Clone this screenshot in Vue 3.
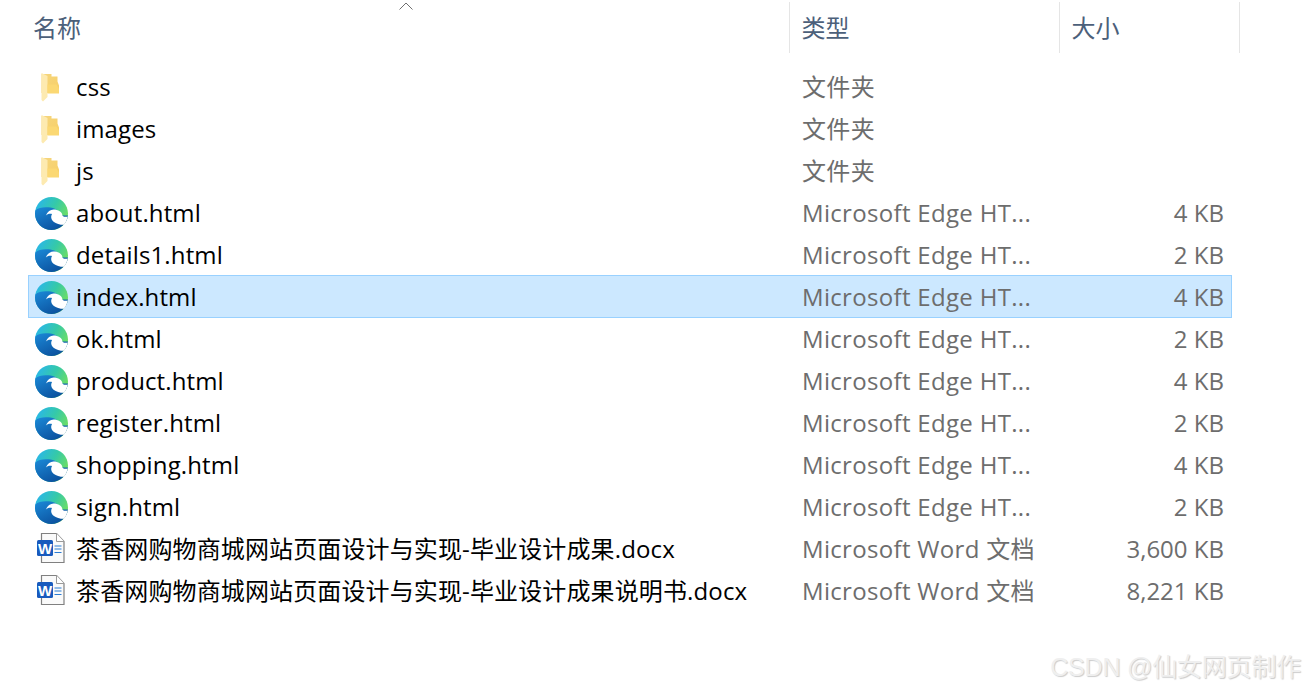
<template>
  <div class="explorer">
    <div class="header">
      <div class="col-head col-name">名称</div>
      <div class="col-head col-type">类型</div>
      <div class="col-head col-size">大小</div>
      <svg class="sort-arrow" viewBox="0 0 14 8" width="14" height="8" fill="none" stroke="#6f6f6f" stroke-width="1">
        <polyline points="0.5,7.5 7,1 13.5,7.5" />
      </svg>
    </div>

    <div class="list">
      <div v-for="file in files" :key="file.name" class="row" :class="{ selected: file.selected }">
        <div class="cell-name">
          <span class="icon">
            <svg v-if="file.kind === 'folder'" viewBox="0 0 33 33" width="33" height="33">
              <path d="M6.500 3h10v2.500h6v5l1.500 4v7.500H6.500z" fill="url(#folderBack)" />
              <path d="M6.500 2l6 3V26l-4.500 4.500-1.500-1.500z" fill="#fdeab0" />
              <path d="M12.500 13.500h9l2.500 4.500v4.500H12.500z" fill="#fbd873" />
            </svg>
            <svg v-else-if="file.kind === 'edge'" viewBox="0 0 32 32" width="33" height="33">
              <circle cx="16" cy="16" r="16" fill="url(#edgeTop)" />
              <path d="M0.300 13C3 10.500 8 9.500 13 10c6 .5 11 3.500 12 8H32c-1 8-8 14-16 14C7 32 0 25 0 16z" fill="url(#edgeBlue)" />
              <path d="M10.500 18c1.500-4 4.500-6 7.500-6 4.500 0 8.500 2.500 8.500 5.500 0 1.500 2 2 5.300 1.500-.8 3-1.800 6-3.800 8-4 0-7.500-1-10-3-2.500-2-3-5-1.500-7.500-2.500-.5-4.500 0-6 1.500z" fill="#fff" />
            </svg>
            <svg v-else viewBox="0 0 33 33" width="33" height="33">
              <path d="M6.500 .500h15l7.500 8V29.500H6.500z" fill="#fafafa" stroke="#808080" stroke-width="1.200" />
              <path d="M21.500 .500v8H29" fill="#fff" stroke="#9a9a9a" stroke-width="1" />
              <rect x="2" y="7" width="16" height="16" rx="1.500" fill="#185abd" />
              <text x="10" y="20.500" class="word-w" text-anchor="middle">W</text>
              <path d="M19.500 13h7M19.500 16h7M19.500 19.500h7" stroke="#2b7cd3" stroke-width="1.200" />
            </svg>
          </span>
          <span class="file-name">{{ file.name }}</span>
        </div>
        <div class="cell-type">{{ file.type }}</div>
        <div class="cell-size">{{ file.size }}</div>
      </div>
    </div>

    <svg width="0" height="0" class="defs">
      <defs>
        <linearGradient id="folderBack" x1="0" y1="0" x2="1" y2="1">
          <stop offset="0" stop-color="#f5d67f" />
          <stop offset="1" stop-color="#f8cf66" />
        </linearGradient>
        <linearGradient id="edgeTop" x1="0.1" y1="0.1" x2="1" y2="0.6">
          <stop offset="0" stop-color="#2ab7e8" />
          <stop offset="0.5" stop-color="#35c9a8" />
          <stop offset="1" stop-color="#72e05e" />
        </linearGradient>
        <linearGradient id="edgeBlue" x1="0" y1="0" x2="0.7" y2="1">
          <stop offset="0" stop-color="#1b8ad8" />
          <stop offset="1" stop-color="#0b4f9c" />
        </linearGradient>
      </defs>
    </svg>

    <div class="watermark">CSDN @仙女网页制作</div>
  </div>
</template>

<script setup>
const edgeType = 'Microsoft Edge HT...'
const wordType = 'Microsoft Word 文档'

const files = [
  { name: 'css', kind: 'folder', type: '文件夹', size: '' },
  { name: 'images', kind: 'folder', type: '文件夹', size: '' },
  { name: 'js', kind: 'folder', type: '文件夹', size: '' },
  { name: 'about.html', kind: 'edge', type: edgeType, size: '4 KB' },
  { name: 'details1.html', kind: 'edge', type: edgeType, size: '2 KB' },
  { name: 'index.html', kind: 'edge', type: edgeType, size: '4 KB', selected: true },
  { name: 'ok.html', kind: 'edge', type: edgeType, size: '2 KB' },
  { name: 'product.html', kind: 'edge', type: edgeType, size: '4 KB' },
  { name: 'register.html', kind: 'edge', type: edgeType, size: '2 KB' },
  { name: 'shopping.html', kind: 'edge', type: edgeType, size: '4 KB' },
  { name: 'sign.html', kind: 'edge', type: edgeType, size: '2 KB' },
  { name: '茶香网购物商城网站页面设计与实现-毕业设计成果.docx', kind: 'word', type: wordType, size: '3,600 KB' },
  { name: '茶香网购物商城网站页面设计与实现-毕业设计成果说明书.docx', kind: 'word', type: wordType, size: '8,221 KB' }
]
</script>

<style>
html, body {
  background: #fff;
}
</style>

<style scoped>
.explorer {
  position: relative;
  width: 1305px;
  height: 689px;
  overflow: hidden;
  padding: 2px 0 0 28px;
  box-sizing: border-box;
  background: #fff;
  font-family: "Open Sans", "Noto Sans CJK SC", sans-serif;
  font-size: 24px;
  color: #000;
}

.header {
  display: flex;
  height: 51px;
  width: 1212px;
}

.col-head {
  display: flex;
  align-items: center;
  box-sizing: border-box;
  padding-bottom: 2px;
  color: #4c607a;
  border-right: 1px solid #e5e5e5;
}

.col-name {
  width: 762px;
  padding-left: 5px;
}

.col-type {
  width: 270px;
  padding-left: 11.500px;
}

.col-size {
  width: 180px;
  padding-left: 11.500px;
}

.sort-arrow {
  position: absolute;
  left: 399px;
  top: 2px;
}

.list {
  margin-top: 12px;
  width: 1204px;
}

.row {
  display: flex;
  align-items: center;
  height: 42px;
  padding-top: 2px;
  line-height: 32px;
  box-sizing: border-box;
  border: 1px solid transparent;
}

.row.selected {
  height: 43px;
  padding-top: 1px;
  margin-bottom: -1px;
  background: #cce8ff;
  border-color: #99d1ff;
}

.cell-name {
  display: flex;
  align-items: center;
  width: 773px;
  flex-shrink: 0;
}

.icon {
  display: flex;
  width: 33px;
  height: 33px;
  margin-top: 1px;
  margin-left: 6px;
  margin-right: 8px;
}

.file-name {
  white-space: nowrap;
  letter-spacing: 0.13px;
}

.cell-type {
  width: 300px;
  flex-shrink: 0;
  color: #6d6d6d;
  white-space: nowrap;
  letter-spacing: 0.32px;
}

.cell-size {
  width: 122px;
  flex-shrink: 0;
  text-align: right;
  color: #6d6d6d;
  white-space: nowrap;
}

.word-w {
  font-family: "Liberation Sans", sans-serif;
  font-size: 15px;
  font-weight: 700;
  fill: #fff;
}

.defs {
  position: absolute;
}

.watermark {
  position: absolute;
  right: 4px;
  bottom: 8px;
  font-family: "Liberation Sans", "Noto Sans CJK SC", sans-serif;
  font-size: 25px;
  line-height: 28px;
  letter-spacing: -0.2px;
  color: #efefef;
  text-shadow: 1px 1px 1px #cccccc;
  white-space: nowrap;
}
</style>
